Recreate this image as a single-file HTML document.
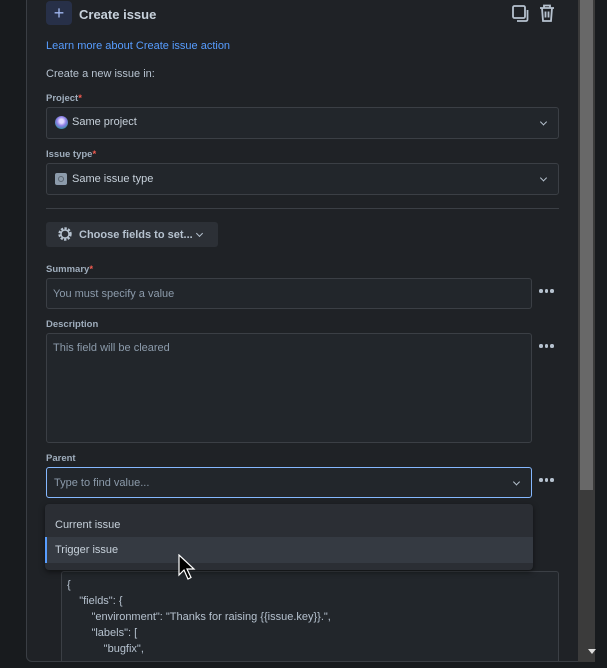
<!DOCTYPE html>
<html><head><style>
*{box-sizing:border-box;margin:0;padding:0}
body{width:607px;height:668px;background:#181b1e;font-family:"Liberation Sans",sans-serif;position:relative;overflow:hidden;color:#b6c2cf}
.panel{position:absolute;left:26px;top:-10px;width:566px;height:672px;background:#1f2226;border:1px solid #3a3e44;border-radius:6px}
.a{position:absolute}
.lbl{font-size:9.5px;color:#9fadbc;font-weight:bold}
.req{color:#f15b50}
.box{position:absolute;left:46px;width:513px;border:1px solid #3b3f45;border-radius:3px;background:#22262b}
.chev{position:absolute;right:12px;top:50%;width:5px;height:5px;border-right:1.5px solid #b6c2cf;border-bottom:1.5px solid #b6c2cf;transform:translateY(-70%) rotate(45deg)}
.dots{position:absolute;width:16px;height:4px}
.dots i{position:absolute;top:0;width:3.5px;height:3.5px;border-radius:50%;background:#b6c2cf}
.sb{position:absolute;left:578px;top:0;width:17px;height:662px;background:#3b3b3b}
.th{position:absolute;left:580px;top:0;width:13px;height:490px;background:#686868}
</style></head><body>
<div class="panel"></div>
<div class="sb"></div><div class="th"></div>
<div class="a" style="left:588px;top:649px;width:0;height:0;border-left:4px solid transparent;border-right:4px solid transparent;border-top:5px solid #ddd"></div>

<div class="a" style="left:46px;top:1px;width:26px;height:24px;background:#273048;border-radius:4px;color:#9fb6ef;font-size:18px;text-align:center;line-height:24px">+</div>
<div class="a" style="left:79px;top:7px;font-size:13px;font-weight:bold;color:#c7d1db">Create issue</div>
<svg class="a" style="left:511px;top:4px" width="20" height="20" viewBox="0 0 20 20" fill="none" stroke="#b6c2cf" stroke-width="1.8"><rect x="2" y="2" width="12" height="12" rx="1.5"/><path d="M16.5 6v9.5a1.5 1.5 0 0 1-1.5 1.5H6"/></svg>
<svg class="a" style="left:538px;top:3px" width="18" height="20" viewBox="0 0 18 20" fill="none" stroke="#b6c2cf" stroke-width="1.8"><path d="M2 5h14M6 5V2.5h6V5M4 5l1 13h8l1-13"/><path d="M7.5 8.5v6M10.5 8.5v6"/></svg>

<div class="a" style="left:46px;top:40px;font-size:11px;color:#579dff">Learn more about Create issue action</div>
<div class="a" style="left:46px;top:68px;font-size:11px;color:#b6c2cf">Create a new issue in:</div>

<div class="a lbl" style="left:46px;top:93px">Project<span class="req">*</span></div>
<div class="box" style="top:107px;height:32px"><div class="a" style="left:8px;top:8px;width:13px;height:13px;border-radius:50%;background:radial-gradient(circle at 50% 40%,#e0d9ff 20%,#8f7ee7 45%,#2f8fa0 80%)"></div><div class="a" style="left:25px;top:8px;font-size:11px;color:#c7d1db">Same project</div><div class="chev"></div></div>

<div class="a lbl" style="left:46px;top:149px">Issue type<span class="req">*</span></div>
<div class="box" style="top:163px;height:32px"><div class="a" style="left:8px;top:9px;width:12px;height:12px;border-radius:2px;background:#8c9bab"><div style="margin:3px;width:6px;height:6px;border-radius:50%;border:1.5px solid #5a6470"></div></div><div class="a" style="left:25px;top:9px;font-size:11px;color:#c7d1db">Same issue type</div><div class="chev"></div></div>

<div class="a" style="left:46px;top:208px;width:513px;height:1px;background:#3b3f45"></div>

<div class="a" style="left:46px;top:222px;width:172px;height:25px;background:#2c3036;border-radius:3px"></div>
<svg class="a" style="left:57px;top:226px" width="16" height="16" viewBox="0 0 16 16"><circle cx="8" cy="8" r="5.2" fill="none" stroke="#b6c2cf" stroke-width="3" stroke-dasharray="2.2 1.2"/><circle cx="8" cy="8" r="4" fill="none" stroke="#b6c2cf" stroke-width="1.4"/></svg>
<div class="a" style="left:79px;top:229px;font-size:11px;font-weight:bold;color:#b6c2cf">Choose fields to set...</div>
<div class="a" style="left:197px;top:231px;width:5px;height:5px;border-right:1.5px solid #b6c2cf;border-bottom:1.5px solid #b6c2cf;transform:rotate(45deg)"></div>

<div class="a lbl" style="left:46px;top:264px">Summary<span class="req">*</span></div>
<div class="box" style="top:278px;width:486px;height:31px"><div class="a" style="left:6px;top:9px;font-size:11px;color:#8c9bab">You must specify a value</div></div>
<div class="dots" style="left:539px;top:289px"><i style="left:0"></i><i style="left:5.5px"></i><i style="left:11px"></i></div>

<div class="a lbl" style="left:46px;top:319px">Description</div>
<div class="box" style="top:333px;width:486px;height:110px"><div class="a" style="left:6px;top:8px;font-size:11px;color:#8c9bab">This field will be cleared</div></div>
<div class="dots" style="left:539px;top:344px"><i style="left:0"></i><i style="left:5.5px"></i><i style="left:11px"></i></div>

<div class="a lbl" style="left:46px;top:453px">Parent</div>
<div class="box" style="top:467px;width:486px;height:31px;border-color:#85b8ff"><div class="a" style="left:7px;top:9px;font-size:11px;color:#8c9bab">Type to find value...</div><div class="chev"></div></div>
<div class="dots" style="left:539px;top:478px"><i style="left:0"></i><i style="left:5.5px"></i><i style="left:11px"></i></div>

<div class="a" style="left:61px;top:571px;width:498px;height:90px;border:1px solid #3b3f45;border-bottom:none;border-radius:3px 3px 0 0;background:#22262b;font-size:11px;color:#b6c2cf;line-height:16px;padding:5px 0 0 5px;white-space:pre;overflow:hidden">{
    "fields": {
        "environment": "Thanks for raising {{issue.key}}.",
        "labels": [
            "bugfix",</div>

<div class="a" style="left:45px;top:504px;width:488px;height:66px;background:#2b2e34;border-radius:4px;box-shadow:0 2px 6px rgba(0,0,0,.5)">
<div class="a" style="left:10px;top:15px;font-size:11px;color:#c7d1db">Current issue</div>
<div class="a" style="left:0;top:33px;width:488px;height:26px;background:#353a42;border-left:2px solid #579dff"></div>
<div class="a" style="left:10px;top:40px;font-size:11px;color:#c7d1db">Trigger issue</div>
</div>

<svg class="a" style="left:178px;top:554px" width="20" height="30" viewBox="0 0 20 30"><path d="M1 1v20l5-5 4 9 3-1.5-4-8.5h7z" fill="#000" stroke="#fff" stroke-width="1.2"/></svg>
</body></html>
